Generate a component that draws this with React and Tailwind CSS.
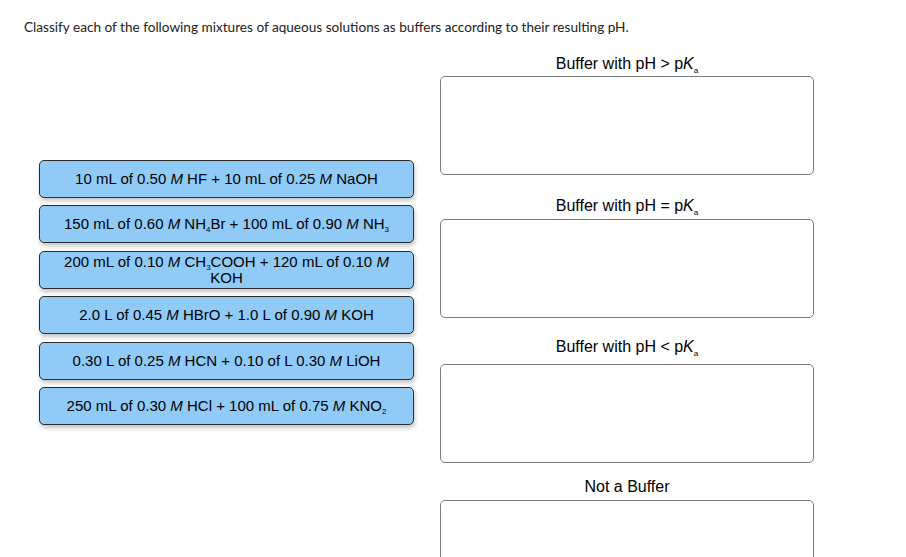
import React from "react";

const arial = { fontFamily: '"Liberation Sans", Arial, sans-serif' };

function M() {
  return <i>M</i>;
}
function Sub({ children }) {
  return <sub className="text-[8px] relative top-[3px] align-baseline">{children}</sub>;
}

const cards = [
  <>10 mL of 0.50 <M /> HF + 10 mL of 0.25 <M /> NaOH</>,
  <>150 mL of 0.60 <M /> NH<Sub>4</Sub>Br + 100 mL of 0.90 <M /> NH<Sub>3</Sub></>,
  <>200 mL of 0.10 <M /> CH<Sub>3</Sub>COOH + 120 mL of 0.10 <M /><br />KOH</>,
  <>2.0 L of 0.45 <M /> HBrO + 1.0 L of 0.90 <M /> KOH</>,
  <>0.30 L of 0.25 <M /> HCN + 0.10 of L 0.30 <M /> LiOH</>,
  <>250 mL of 0.30 <M /> HCl + 100 mL of 0.75 <M /> KNO<Sub>2</Sub></>,
];

function Label({ children, className }) {
  return (
    <div className={"h-[20px] leading-[20px] text-center text-[16px] text-black " + className} style={arial}>
      {children}
    </div>
  );
}

function Ka() {
  return (
    <>
      p<i>K</i>
      <sub className="text-[8px] relative top-[4px] align-baseline">a</sub>
    </>
  );
}

function Box({ h = "h-[99px]" }) {
  return <div className={"w-[374px] border border-[#7a7a7a] rounded-[5px] bg-white " + h} />;
}

export default function App() {
  return (
    <div className="w-[906px] h-[557px] overflow-hidden bg-white px-[24px]">
      <div
        className="pt-[18px] h-[40px] text-[13.6px] leading-[18px] text-[#222]"
        style={{ fontFamily: 'Lato, "Open Sans", sans-serif' }}
      >
        Classify each of the following mixtures of aqueous solutions as buffers according to their resulting pH.
      </div>
      <div className="flex pl-[15px] gap-[26px]">
        <div className="w-[375px] pt-[120px] flex flex-col gap-[7.4px]">
          {cards.map((c, i) => (
            <div
              key={i}
              className="h-[38px] flex items-center justify-center text-center bg-[#90cbf7] border border-[#2b2b2b] rounded-[5px] shadow-[1px_3px_4px_rgba(0,0,0,0.22)] text-[15px] leading-[16px] text-black px-2"
              style={arial}
            >
              <div>{c}</div>
            </div>
          ))}
        </div>
        <div className="w-[374px] pt-[14px] flex flex-col">
          <Label className="mb-[2px]">
            Buffer with pH &gt; <Ka />
          </Label>
          <Box />
          <Label className="mt-[21px] mb-[3px]">
            Buffer with pH = <Ka />
          </Label>
          <Box />
          <Label className="mt-[19px] mb-[7px]">
            Buffer with pH &lt; <Ka />
          </Label>
          <Box />
          <Label className="mt-[14px] mb-[3px]">Not a Buffer</Label>
          <Box h="h-[99px]" />
        </div>
      </div>
    </div>
  );
}
